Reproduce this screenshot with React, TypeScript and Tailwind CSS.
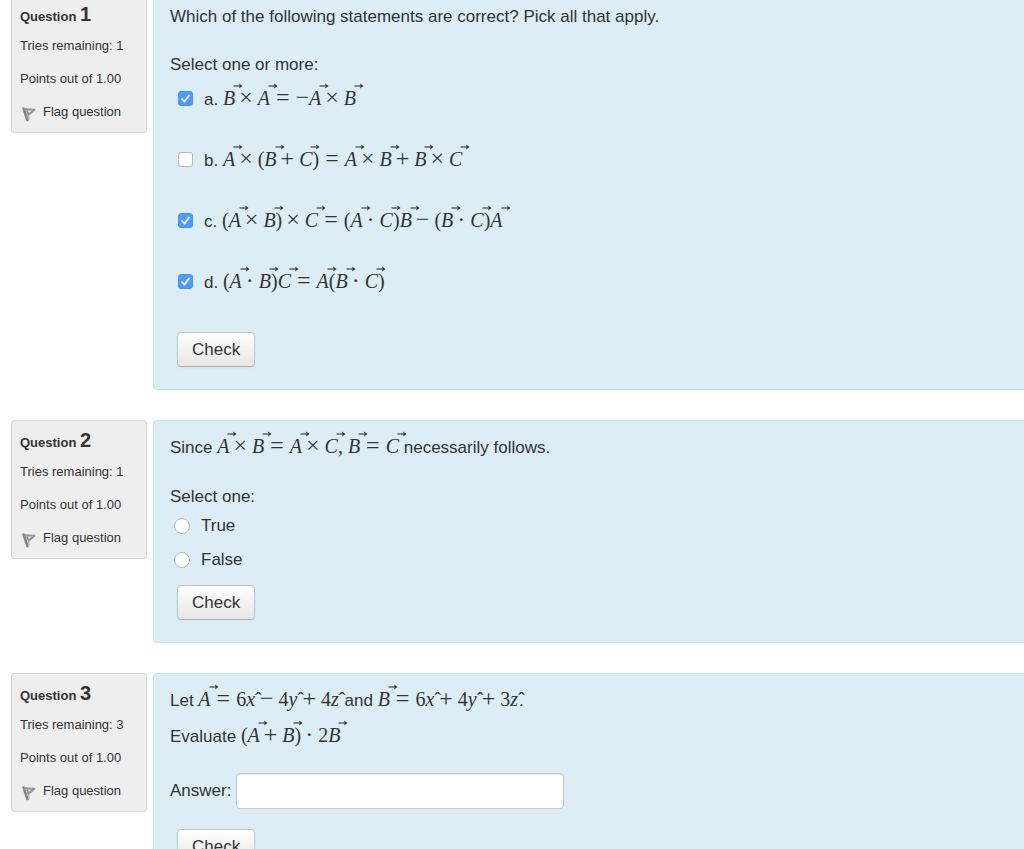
import { ReactNode, useState } from "react";

function Vec({ children }: { children: string }) {
  return (
    <span className="relative italic">
      {children}
      <svg
        viewBox="0 0 10 6"
        className="absolute -top-1 left-full -ml-0.5 h-[6px] w-[10px]"
        fill="none"
        aria-hidden="true"
      >
        <path d="M0.5 3H8" stroke="#333" strokeWidth="1.1" />
        <path d="M6 0.6 9.5 3 6 5.4 6.8 3Z" fill="#333" />
      </svg>
    </span>
  );
}

function Hat({ children }: { children: string }) {
  return (
    <span className="relative mr-px italic">
      {children}
      <span className="absolute top-0.5 left-full leading-none not-italic">ˆ</span>
    </span>
  );
}

// binary operator: + - x and the dot
function Bin({ children }: { children: string }) {
  return <span className="mr-[5px] ml-1 text-[24px] leading-none">{children}</span>;
}

function Rel({ children }: { children: string }) {
  return <span className="mx-[6px] text-[24px] leading-none">{children}</span>;
}

function Formula({ children }: { children: ReactNode }) {
  return (
    <span className="whitespace-nowrap font-['Liberation_Serif',serif] text-[20px] leading-none">
      {children}
    </span>
  );
}

function FlagIcon() {
  return (
    <svg width="14" height="15" viewBox="0 0 14 15" fill="none" aria-hidden="true">
      <path d="M1.6 1.6 5.4 13" stroke="#858585" strokeWidth="2.6" strokeLinecap="round" />
      <path d="M2.5 2.2 12.4 2.8 6.6 7.8 5 3.6" stroke="#939393" strokeWidth="2" strokeLinejoin="round" />
      <path d="M6.8 9 6.8 13" stroke="#b5b5b5" strokeWidth="1.4" />
    </svg>
  );
}

function QuestionInfo({ number, tries }: { number: number; tries: number }) {
  return (
    <aside className="w-[136px] shrink-0 rounded-[3px] border border-[#d5d5d5] bg-[#eeeeee] px-2 pt-[9px] pb-[10px] text-[13px] leading-5">
      <h3 className="mb-[9px] font-bold">
        Question <span className="text-[20px] leading-none">{number}</span>
      </h3>
      <div className="flex flex-col gap-[13px]">
        <p>Tries remaining: {tries}</p>
        <p>Points out of 1.00</p>
        <button type="button" className="flex items-center gap-[7px] pl-[2px] text-left">
          <span className="pt-1">
            <FlagIcon />
          </span>
          Flag question
        </button>
      </div>
    </aside>
  );
}

function Question({ number, tries, children }: { number: number; tries: number; children: ReactNode }) {
  return (
    <section className="flex items-start gap-[6px]">
      <QuestionInfo number={number} tries={tries} />
      <div className="min-w-0 flex-1 rounded-l border border-r-0 border-[#bce8f1] bg-[#dcedf5] pt-[9px] pb-[22px] pl-4">
        {children}
      </div>
    </section>
  );
}

function CheckButton() {
  return (
    <button
      type="button"
      className="ml-[7px] block h-[35px] rounded border border-[#c4c4c4] border-b-[#b0b0b0] bg-linear-to-b from-white to-[#e6e6e6] px-[14px] leading-6 shadow-xs"
    >
      Check
    </button>
  );
}

const choices = [
  {
    id: "a",
    checked: true,
    formula: (
      <>
        <Vec>B</Vec><Bin>×</Bin><Vec>A</Vec><Rel>=</Rel><span className="text-[24px] leading-none">−</span><Vec>A</Vec><Bin>×</Bin><Vec>B</Vec>
      </>
    ),
  },
  {
    id: "b",
    checked: false,
    formula: (
      <>
        <Vec>A</Vec><Bin>×</Bin>(<Vec>B</Vec><Bin>+</Bin><Vec>C</Vec>)<Rel>=</Rel><Vec>A</Vec><Bin>×</Bin><Vec>B</Vec><Bin>+</Bin><Vec>B</Vec><Bin>×</Bin><Vec>C</Vec>
      </>
    ),
  },
  {
    id: "c",
    checked: true,
    formula: (
      <>
        (<Vec>A</Vec><Bin>×</Bin><Vec>B</Vec>)<Bin>×</Bin><Vec>C</Vec><Rel>=</Rel>(<Vec>A</Vec><Bin>·</Bin><Vec>C</Vec>)<Vec>B</Vec><Bin>−</Bin>(<Vec>B</Vec><Bin>·</Bin><Vec>C</Vec>)<Vec>A</Vec>
      </>
    ),
  },
  {
    id: "d",
    checked: true,
    formula: (
      <>
        (<Vec>A</Vec><Bin>·</Bin><Vec>B</Vec>)<Vec>C</Vec><Rel>=</Rel><Vec>A</Vec>(<Vec>B</Vec><Bin>·</Bin><Vec>C</Vec>)
      </>
    ),
  },
];

function Choice({ id, checked, formula }: { id: string; checked: boolean; formula: ReactNode }) {
  return (
    <div className="flex h-[42px] items-center pl-2">
      <span className="grid place-items-center">
        <input
          id={`choice-${id}`}
          type="checkbox"
          defaultChecked={checked}
          className="peer col-start-1 row-start-1 size-[15px] appearance-none rounded-[3px] border border-[#b5b5b5] bg-white checked:border-[#4a93f5] checked:bg-[#4f9bf8]"
        />
        <svg
          viewBox="0 0 15 15"
          className="pointer-events-none invisible col-start-1 row-start-1 size-[15px] peer-checked:visible"
          fill="none"
          aria-hidden="true"
        >
          <path d="M4 8 6.5 10.6 11 4.4" stroke="white" strokeWidth="1.7" strokeLinecap="round" strokeLinejoin="round" />
        </svg>
      </span>
      <label htmlFor={`choice-${id}`} className="pl-[11px]">
        {id}. <Formula>{formula}</Formula>
      </label>
    </div>
  );
}

export default function App() {
  const [answer, setAnswer] = useState("");

  return (
    <main className="-mt-[6px] flex flex-col gap-[30px] bg-white pb-8 pl-[11px] font-['Liberation_Sans',sans-serif] text-[17px] leading-6 text-[#333]">
      <Question number={1} tries={1}>
        <p className="pt-px">Which of the following statements are correct? Pick all that apply.</p>
        <fieldset className="mt-6">
          <legend>Select one or more:</legend>
          <div className="mb-[30px] flex flex-col gap-[19px]">
            {choices.map((choice) => (
              <Choice key={choice.id} {...choice} />
            ))}
          </div>
        </fieldset>
        <CheckButton />
      </Question>

      <Question number={2} tries={1}>
        <p className="leading-9">
          Since <Formula><Vec>A</Vec><Bin>×</Bin><Vec>B</Vec><Rel>=</Rel><Vec>A</Vec><Bin>×</Bin><Vec>C</Vec>, <Vec>B</Vec><Rel>=</Rel><Vec>C</Vec></Formula>{" "}
          necessarily follows.
        </p>
        <fieldset className="mt-[19px] mb-2">
          <legend>Select one:</legend>
          {["True", "False"].map((value) => (
            <label key={value} className="flex h-[34px] items-center gap-[11px] pl-1">
              <input
                type="radio"
                name="follows"
                value={value}
                className="size-4 appearance-none rounded-full border border-[#b5b5b5] bg-white checked:border-[5px] checked:border-[#4f9bf8]"
              />
              {value}
            </label>
          ))}
        </fieldset>
        <CheckButton />
      </Question>

      <Question number={3} tries={3}>
        <p className="leading-9">
          Let <Formula><Vec>A</Vec><Rel>=</Rel>6<Hat>x</Hat><Bin>−</Bin>4<Hat>y</Hat><Bin>+</Bin>4<Hat>z</Hat></Formula>{" "}
          and <Formula><Vec>B</Vec><Rel>=</Rel>6<Hat>x</Hat><Bin>+</Bin>4<Hat>y</Hat><Bin>+</Bin>3<Hat>z</Hat></Formula>.
        </p>
        <p className="leading-9">
          Evaluate <Formula>(<Vec>A</Vec><Bin>+</Bin><Vec>B</Vec>)<Bin>·</Bin>2<Vec>B</Vec></Formula>
        </p>
        <div className="mt-[18px] mb-5 flex items-center gap-[5px]">
          <label htmlFor="answer">Answer:</label>
          <input
            id="answer"
            type="text"
            value={answer}
            onChange={(event) => setAnswer(event.target.value)}
            className="h-9 w-[328px] rounded border border-[#c8c8c8] bg-white px-2 shadow-[inset_0_1px_1px_rgba(0,0,0,0.08)]"
          />
        </div>
        <CheckButton />
      </Question>
    </main>
  );
}
